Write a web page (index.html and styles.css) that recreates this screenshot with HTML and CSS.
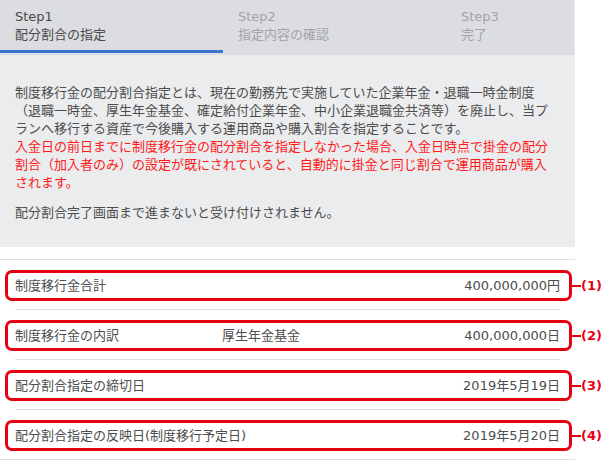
FILE: index.html
```html
<!DOCTYPE html>
<html lang="ja">
<head>
<meta charset="utf-8">
<link rel="stylesheet" href="styles.css">
</head>
<body>
<div class="page">
  <div class="tabs">
    <div class="tab active"><span class="step">Step1</span><span class="name">配分割合の指定</span></div>
    <div class="tab"><span class="step">Step2</span><span class="name">指定内容の確認</span></div>
    <div class="tab"><span class="step">Step3</span><span class="name">完了</span></div>
  </div>
  <div class="intro">
    <p>制度移行金の配分割合指定とは、現在の勤務先で実施していた企業年金・退職一時金制度<br>（退職一時金、厚生年金基金、確定給付企業年金、中小企業退職金共済等）を廃止し、当プ<br>ランへ移行する資産で今後購入する運用商品や購入割合を指定することです。</p>
    <p class="warn">入金日の前日までに制度移行金の配分割合を指定しなかった場合、入金日時点で掛金の配分<br>割合（加入者のみ）の設定が既にされていると、自動的に掛金と同じ割合で運用商品が購入<br>されます。</p>
    <p class="note">配分割合完了画面まで進まないと受け付けされません。</p>
  </div>
  <ul class="rows">
    <li class="row"><span class="label">制度移行金合計</span><span class="mid"></span><span class="value">400,000,000円</span><span class="mark"><span class="mark-label">(1)</span></span></li>
    <li class="row"><span class="label">制度移行金の内訳</span><span class="mid">厚生年金基金</span><span class="value">400,000,000日</span><span class="mark"><span class="mark-label">(2)</span></span></li>
    <li class="row"><span class="label">配分割合指定の締切日</span><span class="mid"></span><span class="value">2019年5月19日</span><span class="mark"><span class="mark-label">(3)</span></span></li>
    <li class="row"><span class="label">配分割合指定の反映日(制度移行予定日)</span><span class="mid"></span><span class="value">2019年5月20日</span><span class="mark"><span class="mark-label">(4)</span></span></li>
  </ul>
</div>
</body>
</html>
```

FILE: styles.css
```css
html, body {
  margin: 0;
  padding: 0;
  background: #ffffff;
}
body {
  width: 605px;
  height: 469px;
  overflow: hidden;
  font-family: "DejaVu Sans", "Noto Sans CJK JP", sans-serif;
  font-size: 13px;
  color: #4d4d4d;
}
.page {
  width: 575px;
}
.tabs {
  display: flex;
  height: 55px;
  box-sizing: border-box;
  padding-bottom: 2px;
  background: #dcdde0;
  overflow: hidden;
  border-right: 1px solid #e8e8e8;
}
.tab {
  flex: 0 0 223px;
  box-sizing: border-box;
  padding: 8px 15px 0;
  display: flex;
  flex-direction: column;
  line-height: 18px;
  color: #a3a4a7;
  border-bottom: 3px solid transparent;
}
.tab.active {
  color: #4a4a4a;
  border-bottom-color: #3a76cf;
}
.intro {
  background: #ebecee;
  padding: 29px 15px 25px;
  line-height: 18px;
}
.intro p {
  margin: 0;
  white-space: nowrap;
}
.intro .warn {
  color: #ff1a1a;
}
.intro .note {
  margin-top: 12px;
}
.rows {
  list-style: none;
  margin: 12px 0 0;
  padding: 0;
  border-top: 1px solid #dedfe1;
  border-bottom: 1px solid #dedfe1;
}
.row {
  position: relative;
  margin: 0 15px;
  height: 49px;
  display: grid;
  grid-template-columns: 207px 1fr auto;
  align-items: center;
  border-bottom: 1px solid #dedfe1;
  white-space: nowrap;
}
.row:last-child {
  border-bottom: none;
}
.mark {
  position: absolute;
  left: -10px;
  right: -12px;
  top: 10px;
  height: 31px;
  box-sizing: border-box;
  border: 3px solid #e60012;
  border-radius: 7px;
}
.mark-label {
  position: absolute;
  left: 100%;
  top: 50%;
  transform: translateY(-50%);
  margin-left: 3px;
  display: flex;
  align-items: center;
  color: #e60012;
  font-weight: bold;
  font-size: 13px;
  line-height: 16px;
}
.mark-label::before {
  content: "";
  width: 9px;
  height: 2px;
  background: #e60012;
}
```
